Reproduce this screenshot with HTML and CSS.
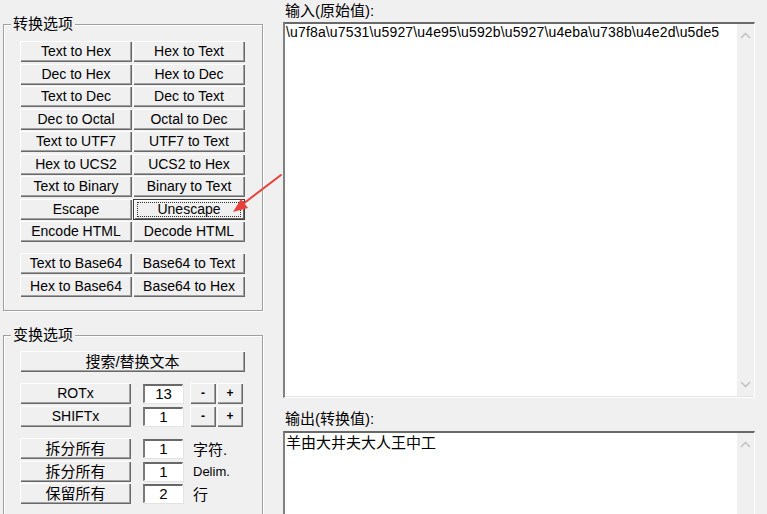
FILE: index.html
```html
<!DOCTYPE html>
<html>
<head>
<meta charset="utf-8">
<title>Converter</title>
<link rel="stylesheet" href="styles.css">
</head>
<body>
<div class="app">
  <div class="left">
    <fieldset class="group g1">
      <legend class="zh">转换选项</legend>
      <div class="grid">
        <button class="btn">Text to Hex</button>
        <button class="btn">Hex to Text</button>
        <button class="btn">Dec to Hex</button>
        <button class="btn">Hex to Dec</button>
        <button class="btn">Text to Dec</button>
        <button class="btn">Dec to Text</button>
        <button class="btn">Dec to Octal</button>
        <button class="btn">Octal to Dec</button>
        <button class="btn">Text to UTF7</button>
        <button class="btn">UTF7 to Text</button>
        <button class="btn">Hex to UCS2</button>
        <button class="btn">UCS2 to Hex</button>
        <button class="btn">Text to Binary</button>
        <button class="btn">Binary to Text</button>
        <button class="btn">Escape</button>
        <button class="btn focus"><span class="focus-ring">Unescape</span></button>
        <button class="btn">Encode HTML</button>
        <button class="btn">Decode HTML</button>
      </div>
      <div class="grid grid-b64">
        <button class="btn">Text to Base64</button>
        <button class="btn">Base64 to Text</button>
        <button class="btn">Hex to Base64</button>
        <button class="btn">Base64 to Hex</button>
      </div>
    </fieldset>

    <fieldset class="group g2">
      <legend class="zh">变换选项</legend>
      <button class="btn wide zh">搜索/替换文本</button>
      <div class="rows rows-a">
        <div class="row">
          <button class="btn opt">ROTx</button>
          <div class="num">13</div>
          <div class="spin">
            <button class="btn small">-</button>
            <button class="btn small">+</button>
          </div>
        </div>
        <div class="row">
          <button class="btn opt">SHIFTx</button>
          <div class="num">1</div>
          <div class="spin">
            <button class="btn small">-</button>
            <button class="btn small">+</button>
          </div>
        </div>
      </div>
      <div class="rows rows-b">
        <div class="row">
          <button class="btn opt zh">拆分所有</button>
          <div class="num">1</div>
          <span class="unit zh">字符.</span>
        </div>
        <div class="row">
          <button class="btn opt zh">拆分所有</button>
          <div class="num">1</div>
          <span class="unit">Delim.</span>
        </div>
        <div class="row">
          <button class="btn opt zh">保留所有</button>
          <div class="num">2</div>
          <span class="unit zh">行</span>
        </div>
      </div>
    </fieldset>
  </div>

  <div class="right">
    <div class="label label-in zh">输入(原始值):</div>
    <div class="edit edit-in">
      <div class="edit-text">\u7f8a\u7531\u5927\u4e95\u592b\u5927\u4eba\u738b\u4e2d\u5de5</div>
      <div class="vscroll">
        <svg class="chev" width="11" height="7" viewBox="0 0 11 7"><path d="M1 6 L5.5 1.5 L10 6" fill="none" stroke="#c4c4c4" stroke-width="1.6"/></svg>
        <svg class="chev" width="11" height="7" viewBox="0 0 11 7"><path d="M1 1 L5.5 5.5 L10 1" fill="none" stroke="#c4c4c4" stroke-width="1.6"/></svg>
      </div>
    </div>
    <div class="label label-out zh">输出(转换值):</div>
    <div class="edit edit-out">
      <div class="edit-text zh">羊由大井夫大人王中工</div>
      <div class="vscroll">
        <svg class="chev" width="11" height="7" viewBox="0 0 11 7"><path d="M1 6 L5.5 1.5 L10 6" fill="none" stroke="#c4c4c4" stroke-width="1.6"/></svg>
      </div>
    </div>
  </div>
</div>

<svg class="arrow" width="767" height="514" viewBox="0 0 767 514">
  <line x1="281" y1="175" x2="243" y2="204" stroke="#e8413b" stroke-width="2" stroke-linecap="round"/>
  <polygon points="233,212 241,199 248,208" fill="#e8413b"/>
</svg>
</body>
</html>
```

FILE: styles.css
```css
html, body {
  margin: 0;
  padding: 0;
  background: #f0f0f0;
  overflow: hidden;
}

body {
  width: 767px;
  height: 514px;
  font-family: "Liberation Sans", "Noto Sans CJK SC", sans-serif;
  font-size: 14px;
  color: #000;
  position: relative;
}

.zh {
  font-size: 15px;
}

.app {
  display: flex;
  align-items: flex-start;
}

.left {
  width: 280px;
  padding-left: 3px;
  box-sizing: border-box;
  flex: none;
}

.group {
  margin: 0;
  width: 260px;
  box-sizing: border-box;
  border: 1px solid #a0a0a0;
  box-shadow: inset 1px 1px 0 #fff, 1px 1px 0 #fff;
  padding: 7px 0 0 16px;
}

.group legend {
  padding: 0 2px;
  margin-left: -9px;
  line-height: 20px;
  background: #f0f0f0;
}

.g1 {
  margin-top: 14px;
  height: 297px;
}

.g2 {
  margin-top: 14px;
  height: 320px;
  padding-top: 6px;
}

.grid {
  display: grid;
  grid-template-columns: 112px 112px;
  grid-auto-rows: 21px;
  column-gap: 1px;
  row-gap: 1.5px;
}

.grid-b64 {
  margin-top: 11px;
  row-gap: 2px;
}

.btn {
  font-family: inherit;
  font-size: 14px;
  color: #000;
  background: #f0f0f0;
  border: 0;
  margin: 0;
  padding: 0;
  height: 21px;
  line-height: 19px;
  text-align: center;
  white-space: nowrap;
  box-shadow: inset 1px 1px 0 #fff, inset -1px -1px 0 #696969, inset -2px -2px 0 #a0a0a0;
}

.btn.zh {
  font-size: 15px;
}

.btn.focus {
  box-shadow: inset 0 0 0 1px #3c3c3c, inset 2px 2px 0 #fff, inset -2px -2px 0 #696969;
  padding: 3px 4px 3px 4px;
}

.focus-ring {
  display: block;
  height: 13px;
  line-height: 13px;
  border: 1px dotted #333;
}

.btn.wide {
  width: 225px;
  display: block;
}

.rows {
  display: flex;
  flex-direction: column;
}

.rows-a {
  margin-top: 11px;
  gap: 2px;
}

.rows-b {
  margin-top: 11px;
  gap: 1.5px;
}

.row {
  display: flex;
  align-items: center;
  height: 21px;
}

.btn.opt {
  width: 111px;
}

.num {
  margin-left: 12px;
  width: 40px;
  height: 19px;
  box-sizing: border-box;
  background: #fff;
  border-style: solid;
  border-width: 2px 1px 1px 2px;
  border-color: #696969 #fff #fff #7a7a7a;
  box-shadow: 1px 1px 0 #e3e3e3;
  text-align: center;
  line-height: 16px;
  font-size: 15px;
}

.spin {
  display: flex;
  gap: 1px;
  margin-left: 7px;
}

.btn.small {
  width: 26px;
  font-weight: bold;
  font-size: 12px;
}

.unit {
  margin-left: 10px;
  font-size: 13px;
}

.unit.zh {
  font-size: 15px;
}

.right {
  margin-left: 3px;
  width: 472px;
  flex: none;
}

.label {
  line-height: 20px;
  padding-left: 2px;
}

.label-in {
  margin-top: 1px;
  margin-bottom: 1px;
}

.label-out {
  margin-top: 11px;
  margin-bottom: 2px;
}

.edit {
  display: flex;
  background: #fff;
  box-sizing: border-box;
  border-style: solid;
  border-width: 2px 1px 1px 2px;
  border-color: #696969 #fff #fff #808080;
  box-shadow: inset -1px -1px 0 #e3e3e3;
}

.edit-in {
  height: 376px;
}

.edit-out {
  height: 120px;
}

.edit-text {
  flex: 1;
  padding-left: 1px;
  line-height: 16px;
  white-space: nowrap;
  letter-spacing: 0.15px;
}

.edit-text.zh {
  line-height: 20px;
  letter-spacing: 0;
}

.vscroll {
  width: 17px;
  flex: none;
  background: #f0f0f0;
  display: flex;
  flex-direction: column;
  justify-content: space-between;
  align-items: center;
  padding: 8px 0 8px;
  box-sizing: border-box;
  margin-bottom: 1px;
}

.arrow {
  position: absolute;
  left: 0;
  top: 0;
  pointer-events: none;
}
```
